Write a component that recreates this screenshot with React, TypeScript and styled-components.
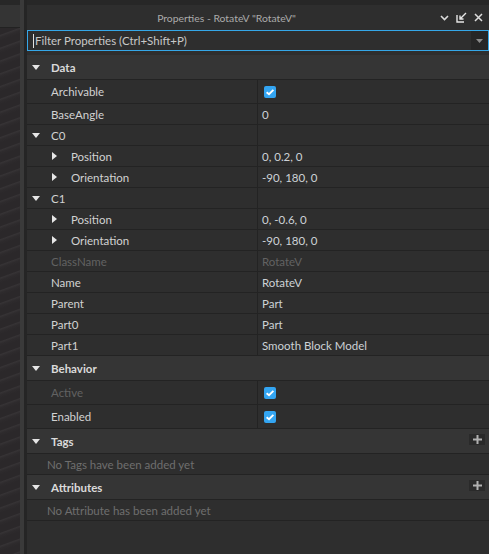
import React from 'react';
import styled, { createGlobalStyle } from 'styled-components';

const GlobalStyle = createGlobalStyle`
  html, body {
    margin: 0;
    padding: 0;
    background: #2e2e2e;
    font-family: Lato, "Open Sans", sans-serif;
    font-size: 11.5px;
    color: #d0d0d0;
    overflow: hidden;
  }
`;

const Screen = styled.div`
  display: flex;
  height: 554px;
  width: 489px;
`;

const ViewportColumn = styled.div`
  display: flex;
  flex-direction: column;
  width: 20px;
`;

const ViewportToolbar = styled.div`
  height: 22px;
  border-top: 5px solid #272727;
  border-bottom: 1px solid #222;
  background: #343434;
`;

const Viewport = styled.div`
  flex: 1;
  background: repeating-linear-gradient(
    160deg,
    #2b282a 0px,
    #2b282a 6px,
    #363335 7px,
    #2e2b2d 9px,
    #2b282a 12px
  );
`;

const Splitter = styled.div`
  width: 4px;
  background: #3a3a3a;
  border-right: 3px solid #252525;
`;

const Panel = styled.div`
  flex: 1;
  display: flex;
  flex-direction: column;
  background: #2e2e2e;
  min-width: 0;
`;

const TitleBar = styled.div`
  display: flex;
  align-items: center;
  box-sizing: border-box;
  height: 30px;
  border-top: 5px solid #272727;
  padding-right: 6px;
`;

const Title = styled.div`
  flex: 1;
  text-align: center;
  font-size: 10.4px;
  color: #ababab;
  padding-top: 1px;
  padding-right: 14px;
`;

const TitleIcons = styled.div`
  display: flex;
  align-items: center;
  gap: 7px;
`;

const FilterBox = styled.div`
  display: flex;
  height: 21px;
  box-sizing: border-box;
  border: 1px solid #35a7e8;
`;

const FilterInput = styled.div`
  flex: 1;
  display: flex;
  align-items: center;
  padding-left: 5px;
  color: #c8c8c8;
`;

const Caret = styled.span`
  display: inline-block;
  width: 1px;
  height: 14px;
  background: #e0e0e0;
  margin-right: 1px;
`;

const FilterDrop = styled.div`
  width: 17px;
  display: flex;
  align-items: center;
  justify-content: center;
  background: #262626;
`;

const List = styled.div`
  margin-top: 4px;
  display: flex;
  flex-direction: column;
`;

const CategoryRow = styled.div`
  display: flex;
  align-items: center;
  height: 25px;
  box-sizing: border-box;
  border-bottom: 1px solid #232323;
  background: #353535;
  font-weight: 700;
  color: #dadada;
  padding-left: 5px;
`;

const ArrowSlot = styled.span`
  width: 19px;
  display: flex;
  align-items: center;
`;

const CategoryLabel = styled.span`
  flex: 1;
`;

const AddButton = styled.span`
  align-self: flex-start;
  margin-top: 5px;
  margin-right: 4px;
  width: 16px;
  height: 11px;
  display: flex;
  align-items: center;
  justify-content: center;
  background: #2a2a2a;
`;

const PropRow = styled.div<{ $tall?: boolean }>`
  display: grid;
  grid-template-columns: 230px 1fr;
  height: ${(p) => (p.$tall ? 24 : 21)}px;
  box-sizing: border-box;
  border-bottom: 1px solid #232323;
`;

const NameCell = styled.div<{ $indent: number; $disabled?: boolean }>`
  display: flex;
  align-items: center;
  padding-left: ${(p) => p.$indent}px;
  color: ${(p) => (p.$disabled ? '#626262' : '#d2d2d2')};
  white-space: nowrap;
`;

const ValueCell = styled.div<{ $disabled?: boolean }>`
  display: flex;
  align-items: center;
  border-left: 1px solid #232323;
  padding-left: 4px;
  color: ${(p) => (p.$disabled ? '#626262' : '#cdd2d6')};
  white-space: nowrap;
`;

const EmptyNote = styled.div`
  display: flex;
  align-items: center;
  height: 21px;
  box-sizing: border-box;
  border-bottom: 1px solid #232323;
  padding-left: 20px;
  color: #6e6e6e;
`;

const Check = styled.span`
  margin-left: 2px;
  width: 12px;
  height: 12px;
  border-radius: 2px;
  background: #33a5f2;
  display: flex;
  align-items: center;
  justify-content: center;
`;

const DownArrow = () => (
  <svg width="8" height="5" viewBox="0 0 8 5">
    <path d="M0 0 H8 L4 5 Z" fill="#e6e6e6" />
  </svg>
);

const RightArrow = () => (
  <svg width="5" height="8" viewBox="0 0 5 8">
    <path d="M0 0 L5 4 L0 8 Z" fill="#e6e6e6" />
  </svg>
);

const CheckBox = () => (
  <Check>
    <svg width="10" height="10" viewBox="0 0 10 10">
      <path d="M1.6 5.2 L4 7.2 L8.4 2.8" stroke="#fff" strokeWidth="1.8" fill="none" />
    </svg>
  </Check>
);

const Plus = () => (
  <AddButton>
    <svg width="9" height="9" viewBox="0 0 9 9">
      <path d="M4.5 0 V9 M0 4.5 H9" stroke="#b0b0b0" strokeWidth="2" />
    </svg>
  </AddButton>
);

type Prop = {
  name: string;
  value?: string;
  check?: boolean;
  disabled?: boolean;
  indent?: number;
  group?: 'open' | 'closed';
};

const Property = ({ name, value, check, disabled, indent = 0, group }: Prop) => (
  <PropRow $tall={check}>
    <NameCell $indent={group ? 5 + indent : 24 + indent} $disabled={disabled}>
      {group === 'open' && (
        <ArrowSlot>
          <DownArrow />
        </ArrowSlot>
      )}
      {group === 'closed' && (
        <ArrowSlot>
          <RightArrow />
        </ArrowSlot>
      )}
      {name}
    </NameCell>
    <ValueCell $disabled={disabled}>{check ? <CheckBox /> : value}</ValueCell>
  </PropRow>
);

const Category = ({ label, add }: { label: string; add?: boolean }) => (
  <CategoryRow>
    <ArrowSlot>
      <DownArrow />
    </ArrowSlot>
    <CategoryLabel>{label}</CategoryLabel>
    {add && <Plus />}
  </CategoryRow>
);

const App = () => (
  <Screen>
    <GlobalStyle />
    <ViewportColumn>
      <ViewportToolbar />
      <Viewport />
    </ViewportColumn>
    <Splitter />
    <Panel>
      <TitleBar>
        <Title>Properties - RotateV "RotateV"</Title>
        <TitleIcons>
          <svg width="9" height="6" viewBox="0 0 9 6">
            <path d="M1 1 L4.5 4.5 L8 1" stroke="#dcdcdc" strokeWidth="1.6" fill="none" />
          </svg>
          <svg width="11" height="11" viewBox="0 0 11 11">
            <path d="M1 3 V10 H8" stroke="#e6e6e6" strokeWidth="1.4" fill="none" />
            <path d="M10 1 L4.5 6.5 M4 3.5 V7 H7.5" stroke="#e6e6e6" strokeWidth="1.4" fill="none" />
          </svg>
          <svg width="9" height="9" viewBox="0 0 9 9">
            <path d="M1 1 L8 8 M8 1 L1 8" stroke="#dcdcdc" strokeWidth="1.5" />
          </svg>
        </TitleIcons>
      </TitleBar>
      <FilterBox>
        <FilterInput>
          <Caret />
          Filter Properties (Ctrl+Shift+P)
        </FilterInput>
        <FilterDrop>
          <svg width="7" height="4" viewBox="0 0 7 4">
            <path d="M0 0 H7 L3.5 4 Z" fill="#8a8a8a" />
          </svg>
        </FilterDrop>
      </FilterBox>
      <List>
        <Category label="Data" />
        <Property name="Archivable" check />
        <Property name="BaseAngle" value="0" />
        <Property name="C0" group="open" />
        <Property name="Position" value="0, 0.2, 0" group="closed" indent={20} />
        <Property name="Orientation" value="-90, 180, 0" group="closed" indent={20} />
        <Property name="C1" group="open" />
        <Property name="Position" value="0, -0.6, 0" group="closed" indent={20} />
        <Property name="Orientation" value="-90, 180, 0" group="closed" indent={20} />
        <Property name="ClassName" value="RotateV" disabled />
        <Property name="Name" value="RotateV" />
        <Property name="Parent" value="Part" />
        <Property name="Part0" value="Part" />
        <Property name="Part1" value="Smooth Block Model" />
        <Category label="Behavior" />
        <Property name="Active" check disabled />
        <Property name="Enabled" check />
        <Category label="Tags" add />
        <EmptyNote>No Tags have been added yet</EmptyNote>
        <Category label="Attributes" add />
        <EmptyNote>No Attribute has been added yet</EmptyNote>
      </List>
    </Panel>
  </Screen>
);

export default App;
